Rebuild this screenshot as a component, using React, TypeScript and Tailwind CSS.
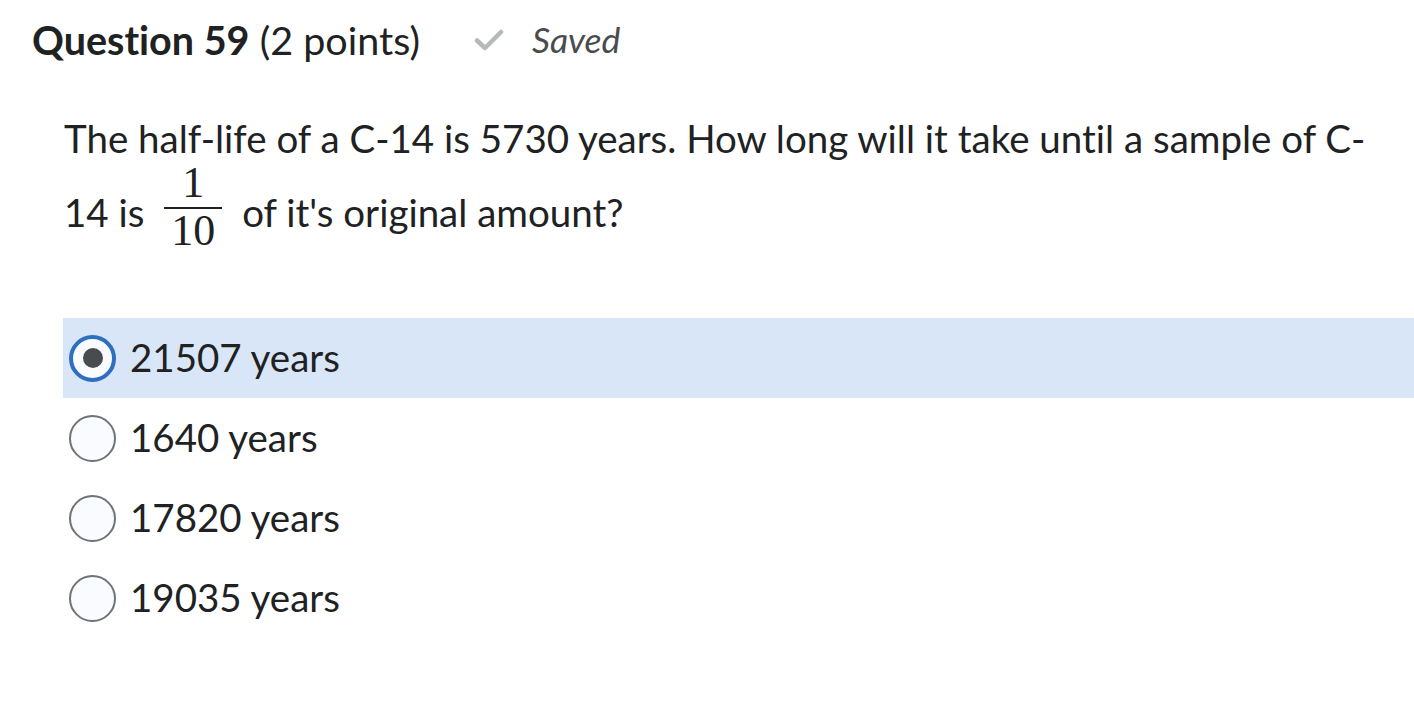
import React from 'react';

const options = [
  { label: '21507 years', checked: true },
  { label: '1640 years', checked: false },
  { label: '17820 years', checked: false },
  { label: '19035 years', checked: false },
];

function Radio({ checked }: { checked: boolean }) {
  if (checked) {
    return (
      <span className="flex h-[47px] w-[47px] shrink-0 items-center justify-center rounded-full border-[4px] border-[#2f6fc0] bg-[#f9fbff]">
        <span className="h-[20px] w-[20px] rounded-full bg-[#494c4e]" />
      </span>
    );
  }
  return <span className="h-[47px] w-[47px] shrink-0 rounded-full border-2 border-[#6e7376] bg-[#f9fbff]" />;
}

export default function App() {
  return (
    <div className="min-h-[710px] bg-white font-['Lato','Noto_Sans',sans-serif] text-[#202122] [font-variant-ligatures:none]">
      <div className="flex items-center pl-[32px] pt-[14px] text-[39.5px] leading-[52px]">
        <h2>
          <span className="font-bold">Question 59</span> <span>(2 points)</span>
        </h2>
        <span className="ml-[54px] flex items-center gap-[28px] text-[#494c4e]">
          <svg width="30" height="24" viewBox="0 0 30 24" fill="none">
            <path d="M3 12.5 L11 20 L27 4" stroke="#b5b9bc" strokeWidth="4.5" strokeLinecap="round" strokeLinejoin="round" />
          </svg>
          <span className="text-[35.5px] italic">Saved</span>
        </span>
      </div>

      <p className="mt-[47px] w-[1400px] pl-[64px] text-[38.5px] leading-[51px]">
        The half-life of a C-14 is 5730 years. How long will it take until a sample of C-14 is{' '}
        <span className="mx-[10px] inline-flex flex-col items-center pt-[3px] align-[30px] font-['Liberation_Serif',serif] text-[44px] leading-none">
          <span className="leading-[32px]">1</span>
          <span className="mt-[8px] h-[2px] w-[58px] bg-[#202122]" />
          <span>10</span>
        </span>{' '}
        of it's original amount?
      </p>

      <div className="mt-[65px] ml-[63px] flex flex-col text-[38.5px]">
        {options.map((o) => (
          <label
            key={o.label}
            className={`flex h-[80px] items-center gap-[14px] pl-[6px] ${o.checked ? 'bg-[#d9e6f7]' : ''}`}
          >
            <Radio checked={o.checked} />
            <span>{o.label}</span>
          </label>
        ))}
      </div>
    </div>
  );
}
